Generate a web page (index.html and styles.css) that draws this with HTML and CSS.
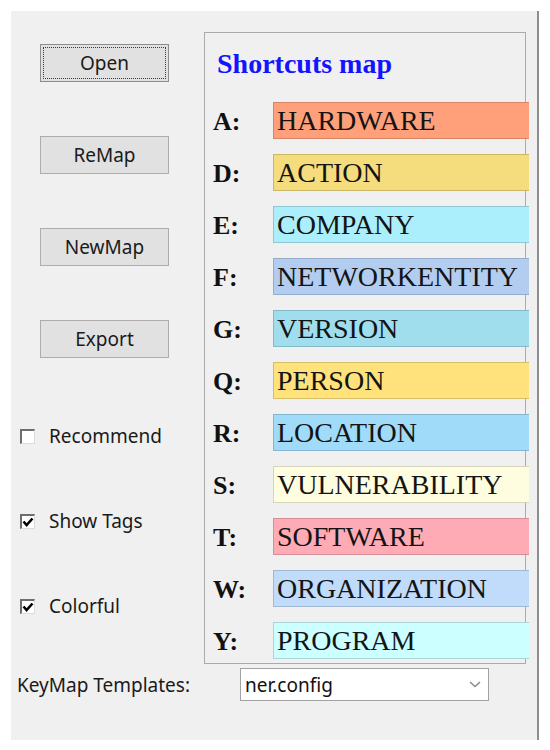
FILE: index.html
```html
<!DOCTYPE html>
<html>
<head>
<meta charset="utf-8">
<link rel="stylesheet" href="styles.css">
</head>
<body>
<div class="window">
  <div class="main">
    <div class="side">
      <div class="buttons">
        <button class="btn btn-focus">Open</button>
        <button class="btn">ReMap</button>
        <button class="btn">NewMap</button>
        <button class="btn">Export</button>
      </div>
      <div class="checks">
        <div class="check"><span class="box"></span><span class="check-label">Recommend</span></div>
        <div class="check"><span class="box"><svg class="tick" viewBox="0 0 12 12"><polyline points="1.5,5.5 4.6,9 10.5,2.5"/></svg></span><span class="check-label">Show Tags</span></div>
        <div class="check"><span class="box"><svg class="tick" viewBox="0 0 12 12"><polyline points="1.5,5.5 4.6,9 10.5,2.5"/></svg></span><span class="check-label">Colorful</span></div>
      </div>
    </div>
    <section class="group">
      <h2 class="title">Shortcuts map</h2>
      <ul class="map">
        <li class="row"><span class="key">A:</span><span class="tag t-hardware">HARDWARE</span></li>
        <li class="row"><span class="key">D:</span><span class="tag t-action">ACTION</span></li>
        <li class="row"><span class="key">E:</span><span class="tag t-company">COMPANY</span></li>
        <li class="row"><span class="key">F:</span><span class="tag t-network">NETWORKENTITY</span></li>
        <li class="row"><span class="key">G:</span><span class="tag t-version">VERSION</span></li>
        <li class="row"><span class="key">Q:</span><span class="tag t-person">PERSON</span></li>
        <li class="row"><span class="key">R:</span><span class="tag t-location">LOCATION</span></li>
        <li class="row"><span class="key">S:</span><span class="tag t-vuln">VULNERABILITY</span></li>
        <li class="row"><span class="key">T:</span><span class="tag t-software">SOFTWARE</span></li>
        <li class="row"><span class="key">W:</span><span class="tag t-org">ORGANIZATION</span></li>
        <li class="row"><span class="key">Y:</span><span class="tag t-program">PROGRAM</span></li>
      </ul>
    </section>
  </div>
  <div class="bottom">
    <span class="bottom-label">KeyMap Templates:</span>
    <div class="combo">
      <span class="combo-text">ner.config</span>
      <svg class="chevron" viewBox="0 0 12 7"><polyline points="1,1 6,5.5 11,1"/></svg>
    </div>
  </div>
</div>
</body>
</html>
```
FILE: styles.css
```css
html, body {
  margin: 0;
  padding: 0;
  background: #ffffff;
}
body {
  padding: 11px 0 0 11px;
  font-family: "Noto Sans", "Open Sans", sans-serif;
  color: #1a1a1a;
}
.window {
  box-sizing: border-box;
  width: 528px;
  height: 729px;
  background: #f0f0f0;
  border-right: 2px solid #8e8e8e;
  padding-top: 21px;
}
.main {
  display: flex;
}
.side {
  width: 193px;
  flex: none;
  padding-top: 12px;
}
.buttons {
  display: flex;
  flex-direction: column;
  gap: 54px;
  padding-left: 29px;
}
.btn {
  box-sizing: border-box;
  width: 129px;
  height: 38px;
  background: #e1e1e1;
  border: 1px solid #adadad;
  font-family: "Noto Sans", "Open Sans", sans-serif;
  font-size: 19px;
  color: #1a1a1a;
  padding: 0;
  line-height: 1;
}
.btn-focus {
  border-color: #8c8c8c;
  outline: 1px dotted #3a3a3a;
  outline-offset: -4px;
}
.checks {
  display: flex;
  flex-direction: column;
  gap: 61px;
  margin-top: 66px;
  padding-left: 9px;
}
.check {
  display: flex;
  align-items: center;
  height: 24px;
}
.box {
  box-sizing: border-box;
  width: 15px;
  height: 15px;
  background: #ffffff;
  border-top: 2px solid #6e6e6e;
  border-left: 2px solid #6e6e6e;
  border-right: 1px solid #dcdcdc;
  border-bottom: 1px solid #dcdcdc;
  display: flex;
  align-items: center;
  justify-content: center;
}
.tick {
  width: 12px;
  height: 12px;
  fill: none;
  stroke: #000000;
  stroke-width: 2.6;
}
.check-label {
  margin-left: 14px;
  font-size: 19px;
}
.group {
  box-sizing: border-box;
  width: 322px;
  height: 632px;
  border: 1px solid #ababab;
  padding: 15px 0 0 0;
}
.title {
  margin: 0 0 22px 12px;
  font-family: "Liberation Serif", serif;
  font-weight: bold;
  font-size: 28px;
  line-height: 32px;
  color: #1414ff;
}
.map {
  list-style: none;
  margin: 0;
  padding: 0;
  display: flex;
  flex-direction: column;
  gap: 15px;
}
.row {
  display: flex;
  align-items: baseline;
  padding-left: 8px;
}
.key {
  width: 60px;
  flex: none;
  font-family: "Liberation Serif", serif;
  font-weight: bold;
  font-size: 26px;
  color: #111111;
}
.tag {
  box-sizing: border-box;
  flex: 1;
  margin-right: -4px;
  height: 37px;
  line-height: 35px;
  border: 1px solid rgba(0, 0, 0, 0.16);
  border-right: none;
  padding-left: 3px;
  font-family: "Liberation Serif", serif;
  font-size: 28px;
  color: #141414;
  white-space: nowrap;
  overflow: hidden;
}
.t-hardware { background: #ffa07a; }
.t-action { background: #f5dc7c; }
.t-company { background: #abeffd; }
.t-network { background: #b3cdf1; }
.t-version { background: #a0deee; }
.t-person { background: #ffe27c; }
.t-location { background: #a0dbf9; }
.t-vuln { background: #fffde0; }
.t-software { background: #ffabb6; }
.t-org { background: #c0dcfa; }
.t-program { background: #ccffff; }
.bottom {
  display: flex;
  align-items: center;
  margin-top: 4px;
}
.bottom-label {
  width: 229px;
  flex: none;
  box-sizing: border-box;
  padding-left: 6px;
  font-size: 19px;
}
.combo {
  box-sizing: border-box;
  width: 249px;
  height: 33px;
  background: #ffffff;
  border: 1px solid #a2a2a2;
  display: flex;
  align-items: center;
  justify-content: space-between;
  padding: 0 7px 0 4px;
}
.combo-text {
  font-size: 19px;
  color: #111111;
}
.chevron {
  width: 12px;
  height: 7px;
  fill: none;
  stroke: #8a8a8a;
  stroke-width: 1.5;
}
```
